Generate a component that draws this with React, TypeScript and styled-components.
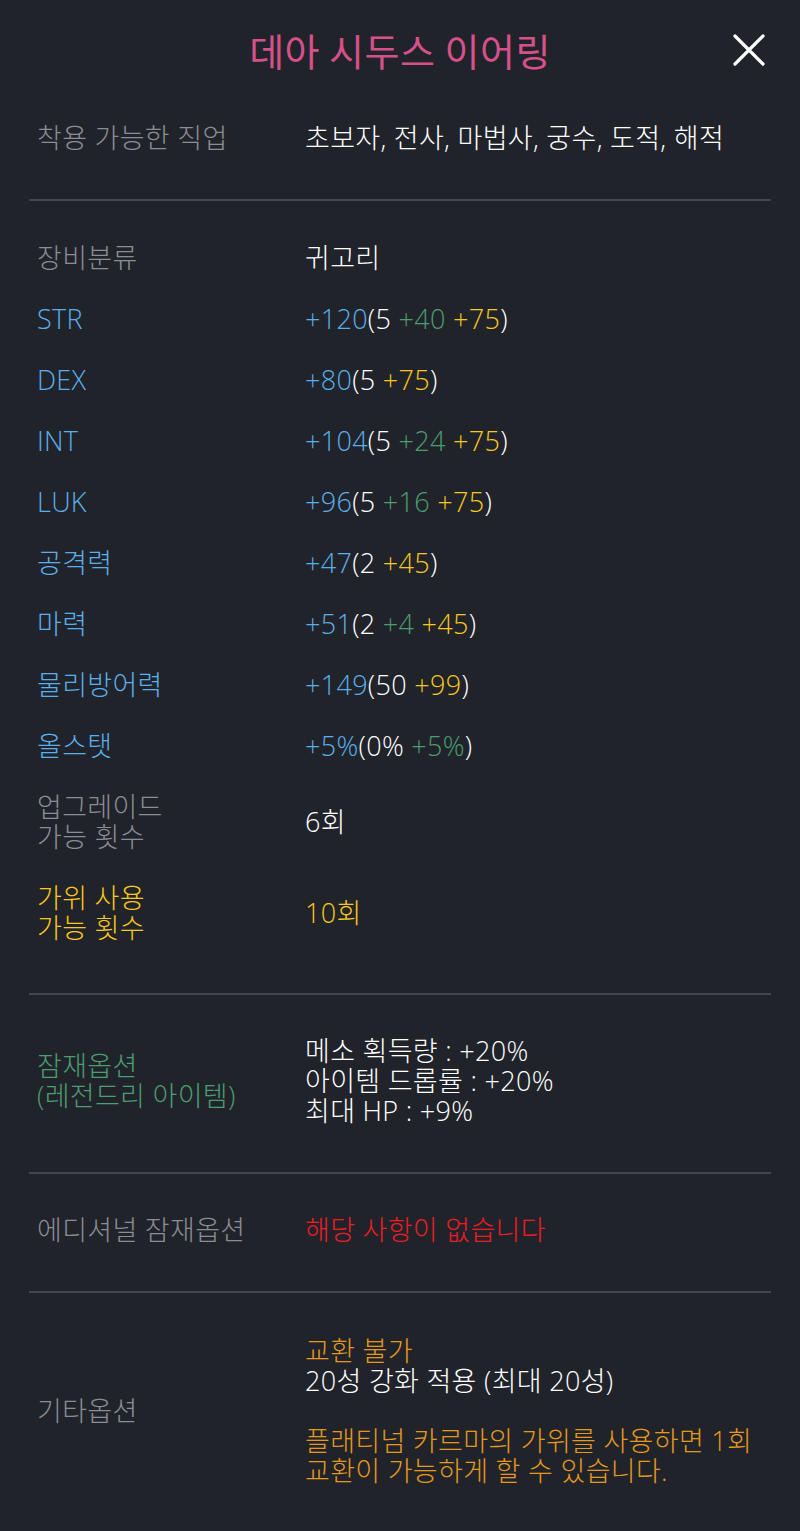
import * as React from "react";
import styled, { createGlobalStyle } from "styled-components";

const C = {
  bg: "#21232b",
  line: "#43464e",
  label: "#8b8d94",
  white: "#ffffff",
  blue: "#5aafea",
  green: "#4c9d6f",
  yellow: "#f8c81c",
  orange: "#e5991c",
  red: "#ee1c24",
  pink: "#d6508a"
};

type Tone = keyof typeof C;

const GlobalStyle = createGlobalStyle`
  html, body {
    margin: 0;
    padding: 0;
    background: ${C.bg};
  }
  body {
    font-family: "Open Sans", "Noto Sans CJK KR", sans-serif;
    font-weight: 300;
    -webkit-font-smoothing: antialiased;
  }
`;

const S = {
  Page: styled.div`
    width: 800px;
    min-height: 1531px;
    background: ${C.bg};
    padding: 0 29px;
    box-sizing: border-box;
  `,
  Header: styled.header`
    display: grid;
    grid-template-columns: 1fr auto 1fr;
    align-items: center;
    height: 60px;
    padding-top: 20px;
  `,
  Title: styled.h1`
    grid-column: 2;
    margin: 0;
    font-family: "Noto Sans CJK KR", sans-serif;
    font-size: 38px;
    font-weight: 400;
    line-height: 60px;
    color: ${C.pink};
    letter-spacing: 0.5px;
  `,
  Close: styled.button`
    grid-column: 3;
    justify-self: end;
    margin-right: 6px;
    width: 32px;
    height: 32px;
    padding: 0;
    border: none;
    background: none;
    cursor: pointer;
    svg {
      display: block;
    }
  `,
  Section: styled.section<{ $top: number; $bottom: number; $last?: boolean }>`
    padding: ${(p) => p.$top}px 0 ${(p) => p.$bottom}px;
    border-bottom: ${(p) => (p.$last ? "none" : `2px solid ${C.line}`)};
  `,
  Row: styled.div`
    display: grid;
    grid-template-columns: 268px 1fr;
    align-items: center;
    padding: 15.5px 0 15.5px 8px;
    font-size: 27px;
    line-height: 30px;
    letter-spacing: 0.3px;
  `,
  Label: styled.div<{ $tone?: Tone }>`
    color: ${(p) => C[p.$tone ?? "label"]};
  `,
  Value: styled.div`
    color: ${C.white};
  `,
  Line: styled.div<{ $tone?: Tone }>`
    color: ${(p) => C[p.$tone ?? "white"]};
    min-height: 30px;
  `,
  Part: styled.span<{ $tone: Tone }>`
    color: ${(p) => C[p.$tone]};
  `
};

type Piece = [string, Tone];

const stats: { name: string; parts: Piece[] }[] = [
  { name: "STR", parts: [["+120", "blue"], ["(5 ", "white"], ["+40 ", "green"], ["+75", "yellow"], [")", "white"]] },
  { name: "DEX", parts: [["+80", "blue"], ["(5 ", "white"], ["+75", "yellow"], [")", "white"]] },
  { name: "INT", parts: [["+104", "blue"], ["(5 ", "white"], ["+24 ", "green"], ["+75", "yellow"], [")", "white"]] },
  { name: "LUK", parts: [["+96", "blue"], ["(5 ", "white"], ["+16 ", "green"], ["+75", "yellow"], [")", "white"]] },
  { name: "공격력", parts: [["+47", "blue"], ["(2 ", "white"], ["+45", "yellow"], [")", "white"]] },
  { name: "마력", parts: [["+51", "blue"], ["(2 ", "white"], ["+4 ", "green"], ["+45", "yellow"], [")", "white"]] },
  { name: "물리방어력", parts: [["+149", "blue"], ["(50 ", "white"], ["+99", "yellow"], [")", "white"]] },
  { name: "올스탯", parts: [["+5%", "blue"], ["(0% ", "white"], ["+5%", "green"], [")", "white"]] }
];

const CloseIcon = () => (
  <svg width="32" height="32" viewBox="0 0 32 32">
    <path d="M2 2 L30 30 M30 2 L2 30" stroke="#fff" strokeWidth="3.2" strokeLinecap="round" />
  </svg>
);

const App: React.FC = () => {
  return (
    <>
      <GlobalStyle />
      <S.Page>
        <S.Header>
          <S.Title>데아 시두스 이어링</S.Title>
          <S.Close aria-label="닫기">
            <CloseIcon />
          </S.Close>
        </S.Header>

        <S.Section $top={27} $bottom={31}>
          <S.Row>
            <S.Label>착용 가능한 직업</S.Label>
            <S.Value>초보자, 전사, 마법사, 궁수, 도적, 해적</S.Value>
          </S.Row>
        </S.Section>

        <S.Section $top={26} $bottom={35}>
          <S.Row>
            <S.Label>장비분류</S.Label>
            <S.Value>귀고리</S.Value>
          </S.Row>
          {stats.map((s) => (
            <S.Row key={s.name}>
              <S.Label $tone="blue">{s.name}</S.Label>
              <S.Value>
                {s.parts.map(([text, tone], i) => (
                  <S.Part key={i} $tone={tone}>
                    {text.replace(/ $/, "\u00a0")}
                  </S.Part>
                ))}
              </S.Value>
            </S.Row>
          ))}
          <S.Row>
            <S.Label>
              업그레이드
              <br />
              가능 횟수
            </S.Label>
            <S.Value>6회</S.Value>
          </S.Row>
          <S.Row>
            <S.Label $tone="yellow">
              가위 사용
              <br />
              가능 횟수
            </S.Label>
            <S.Line $tone="yellow">10회</S.Line>
          </S.Row>
        </S.Section>

        <S.Section $top={25} $bottom={31}>
          <S.Row>
            <S.Label $tone="green">
              잠재옵션
              <br />
              (레전드리 아이템)
            </S.Label>
            <S.Value>
              <S.Line>메소 획득량 : +20%</S.Line>
              <S.Line>아이템 드롭률 : +20%</S.Line>
              <S.Line>최대 HP : +9%</S.Line>
            </S.Value>
          </S.Row>
        </S.Section>

        <S.Section $top={25} $bottom={31}>
          <S.Row>
            <S.Label>에디셔널 잠재옵션</S.Label>
            <S.Line $tone="red">해당 사항이 없습니다</S.Line>
          </S.Row>
        </S.Section>

        <S.Section $top={27} $bottom={24} $last>
          <S.Row>
            <S.Label>기타옵션</S.Label>
            <S.Value>
              <S.Line $tone="orange">교환 불가</S.Line>
              <S.Line>20성 강화 적용 (최대 20성)</S.Line>
              <S.Line />
              <S.Line $tone="orange">플래티넘 카르마의 가위를 사용하면 1회</S.Line>
              <S.Line $tone="orange">교환이 가능하게 할 수 있습니다.</S.Line>
            </S.Value>
          </S.Row>
        </S.Section>
      </S.Page>
    </>
  );
};

export default App;
